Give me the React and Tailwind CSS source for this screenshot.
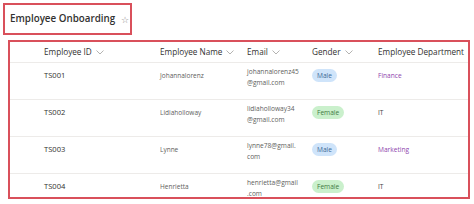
import React from "react";

const rows = [
  { id: "TS001", name: "Johannalorenz", email: ["johannalorenz45", "@gmail.com"], gender: "Male", dept: "Finance" },
  { id: "TS002", name: "Lidiaholloway", email: ["lidiaholloway34", "@gmail.com"], gender: "Female", dept: "IT" },
  { id: "TS003", name: "Lynne", email: ["lynne78@gmail.", "com"], gender: "Male", dept: "Marketing" },
  { id: "TS004", name: "Henrietta", email: ["henrietta@gmail", ".com"], gender: "Female", dept: "IT" },
];

function Chevron() {
  return (
    <svg width="8" height="5" viewBox="0 0 8 5" className="ml-[4px] mt-[1px] shrink-0">
      <path d="M0.5 0.5 L4 4 L7.5 0.5" fill="none" stroke="#a19f9d" strokeWidth="0.8" />
    </svg>
  );
}

function Head({ children }) {
  return (
    <div className="flex items-center text-[8.2px] text-[#323130] whitespace-nowrap">
      {children}
      <Chevron />
    </div>
  );
}

export default function App() {
  return (
    <div className="w-[474px] h-[204px] bg-white overflow-hidden" style={{ fontFamily: '"Open Sans", "Noto Sans", sans-serif' }}>
      <div className="ml-[3px] mt-[3px] w-[129px] h-[32px] border-2 border-[#d9505b] flex items-center pl-[5px]">
        <span className="text-[9.8px] font-semibold text-[#323130] whitespace-nowrap">Employee Onboarding</span>
        <span className="ml-[6px] text-[9px] text-[#8a8886] leading-none">☆</span>
      </div>
      <div className="ml-[8px] mt-[5px] w-[462px] h-[159px] border-2 border-[#d9505b] overflow-hidden">
        <div className="grid grid-cols-[116px_87px_65px_66px_1fr] pl-[34px] h-[21px] items-center border-b border-[#edebe9]">
          <Head>Employee ID</Head>
          <Head>Employee Name</Head>
          <Head>Email</Head>
          <Head>Gender</Head>
          <Head>Employee Department</Head>
        </div>
        {rows.map((r) => (
          <div key={r.id} className="grid grid-cols-[116px_87px_65px_66px_1fr] pl-[34px] h-[37px] border-b border-[#edebe9]">
            <div className="pt-[7px] text-[7.6px] leading-[11px] text-[#323130]">{r.id}</div>
            <div className="pt-[8px] text-[6.5px] leading-[10px] text-[#605e5c]">{r.name}</div>
            <div className="pt-[3px] text-[6.6px] leading-[11px] text-[#605e5c] whitespace-nowrap">
              <div>{r.email[0]}</div>
              <div>{r.email[1]}</div>
            </div>
            <div className="pt-[6px] flex items-start">
              {r.gender === "Male" ? (
                <span className="block rounded-full bg-[#cfe4fa] text-[#3b6796] text-[6.6px] leading-[13px] px-[5px]">Male</span>
              ) : (
                <span className="block rounded-full bg-[#caf0cc] text-[#3f7a3f] text-[6.6px] leading-[13px] px-[5px]">Female</span>
              )}
            </div>
            <div className={`pt-[7px] text-[6.6px] leading-[11px] ${r.dept === "IT" ? "text-[#484644]" : "text-[#8e44ad]"}`}>{r.dept}</div>
          </div>
        ))}
      </div>
    </div>
  );
}
